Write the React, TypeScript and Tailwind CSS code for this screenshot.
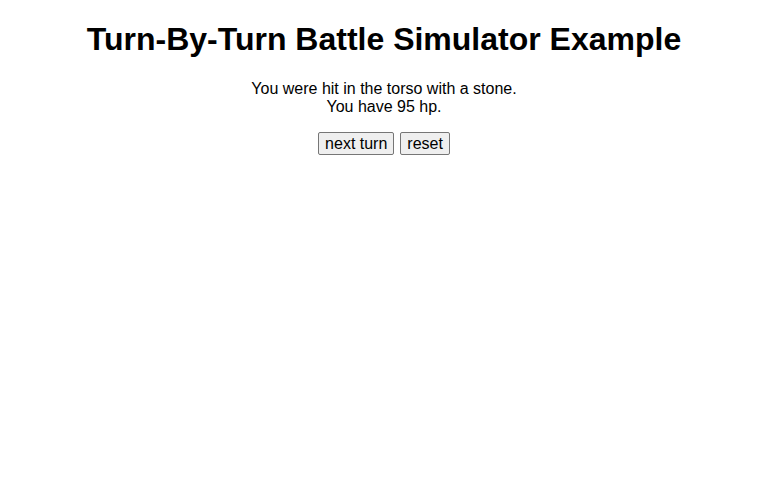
import { useState } from "react";

const hits = [
  { part: "torso", weapon: "stone", dmg: 5 },
  { part: "arm", weapon: "sword", dmg: 8 },
  { part: "leg", weapon: "arrow", dmg: 6 },
];

export default function App() {
  const [hp, setHp] = useState(95);
  const [turn, setTurn] = useState(0);
  const hit = hits[turn % hits.length];

  const nextTurn = () => {
    const h = hits[(turn + 1) % hits.length];
    setTurn(turn + 1);
    setHp(Math.max(0, hp - h.dmg));
  };

  const reset = () => {
    setTurn(0);
    setHp(95);
  };

  return (
    <div className="min-h-screen bg-white text-center text-black font-['Liberation_Sans',Arial,sans-serif]">
      <h1 className="text-[32px] leading-[36.8px] font-bold pt-[21.44px] mb-[21.44px]">
        Turn-By-Turn Battle Simulator Example
      </h1>
      <p className="text-base leading-[18.4px]">
        You were hit in the {hit.part} with a {hit.weapon}.
        <br />
        You have {hp} hp.
      </p>
      <div className="mt-4 flex justify-center gap-[6px]">
        <button
          onClick={nextTurn}
          className="h-[23px] px-[6px] text-base leading-[18px] bg-[#efefef] border border-[#767676] rounded-[2px] hover:bg-[#e5e5e5]"
        >
          next turn
        </button>
        <button
          onClick={reset}
          className="h-[23px] px-[6px] text-base leading-[18px] bg-[#efefef] border border-[#767676] rounded-[2px] hover:bg-[#e5e5e5]"
        >
          reset
        </button>
      </div>
    </div>
  );
}
